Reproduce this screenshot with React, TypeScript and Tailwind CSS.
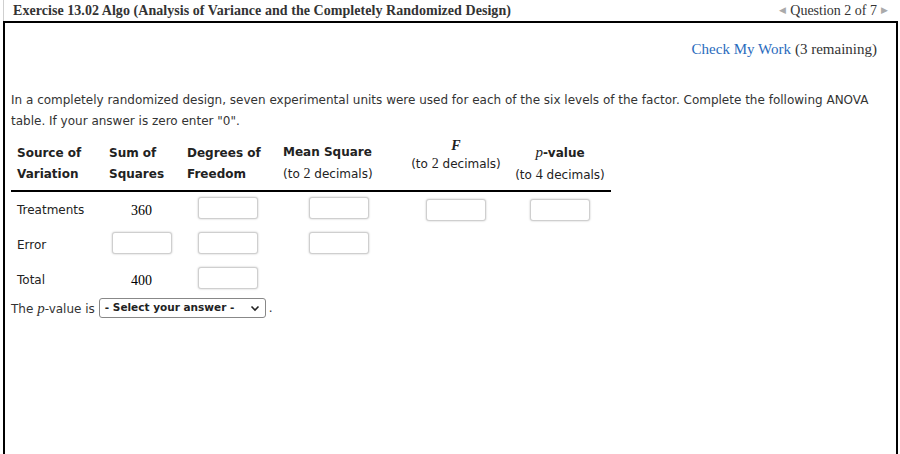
import React from "react";

const verdana = { fontFamily: '"DejaVu Sans", Verdana, sans-serif' };
const serif = { fontFamily: '"Liberation Serif", "Times New Roman", serif' };

function Box({ className = "" }: { className?: string }) {
  return (
    <span
      className={`inline-block w-[60px] h-[22px] rounded-[3px] border border-[#cfcfcf] bg-white shadow-[0_0_2px_rgba(0,0,0,0.25)] ${className}`}
    />
  );
}

function Num({ children }: { children: React.ReactNode }) {
  return (
    <span className="text-[14px] text-black" style={serif}>
      {children}
    </span>
  );
}

const cols = "grid grid-cols-[98px_78px_96px_120px_106px_102px] items-center";

export default function App() {
  return (
    <div className="w-[900px] h-[454px] bg-white overflow-hidden flex flex-col">
      {/* header strip */}
      <div className="h-[21px] flex items-center justify-between border-l border-[#cfcfcf] ml-[3px] pl-[9px] pr-[12px]">
        <span className="font-bold text-[14px] text-[#333] leading-none tracking-[0.05px]" style={serif}>
          Exercise 13.02 Algo (Analysis of Variance and the Completely Randomized Design)
        </span>
        <span className="flex items-center gap-[4px] text-[14px] text-[#333] leading-none" style={serif}>
          <span className="text-[9px] text-[#aaa]">◀</span>
          Question 2 of 7
          <span className="text-[9px] text-[#aaa]">▶</span>
        </span>
      </div>

      <div className="flex-1 ml-[3px] mr-[2px] border-2 border-black border-b-0 px-[6px]">
        <div className="flex justify-end pt-[15px] pr-[13px] text-[15px]" style={serif}>
          <span className="text-[#2a6bbd]">Check My Work</span>
          <span className="ml-[4px] text-[#333]">(3 remaining)</span>
        </div>

        <p className="mt-[29px] text-[12px] leading-[21px] text-[#333]" style={verdana}>
          In a completely randomized design, seven experimental units were used for each of the six levels of the factor. Complete the following ANOVA table. If your answer is zero enter "0".
        </p>

        <div className="mt-[10px] w-[600px] text-[12px] text-[#222]" style={verdana}>
          <div className={`${cols} pb-[4px] border-b-2 border-black leading-[21px]`}>
            <div className="pl-[6px] font-bold">Source of<br />Variation</div>
            <div className="font-bold">Sum of<br />Squares</div>
            <div className="font-bold">Degrees of<br />Freedom</div>
            <div>
              <span className="font-bold">Mean Square</span>
              <br />
              (to <span style={serif} className="text-[14px]">2</span> decimals)
            </div>
            <div className="text-center leading-[18px] self-start -mt-[5px]">
              <span style={serif} className="italic font-bold text-[14px]">F</span>
              <br />
              (to <span style={serif} className="text-[14px]">2</span> decimals)
            </div>
            <div className="text-center">
              <span style={serif} className="italic text-[15px]">p</span>
              <span className="font-bold">-value</span>
              <br />
              (to <span style={serif} className="text-[14px]">4</span> decimals)
            </div>
          </div>

          <div className={`${cols} h-[35px] mt-[1px]`}>
            <div className="pl-[6px]">Treatments</div>
            <div className="pl-[22px]"><Num>360</Num></div>
            <div className="pl-[11px]"><Box /></div>
            <div className="pl-[26px]"><Box /></div>
            <div className="flex justify-center"><Box /></div>
            <div className="flex justify-center"><Box /></div>
          </div>
          <div className={`${cols} h-[35px]`}>
            <div className="pl-[6px]">Error</div>
            <div className="pl-[3px]"><Box /></div>
            <div className="pl-[11px]"><Box /></div>
            <div className="pl-[26px]"><Box /></div>
            <div />
            <div />
          </div>
          <div className={`${cols} h-[35px]`}>
            <div className="pl-[6px]">Total</div>
            <div className="pl-[22px]"><Num>400</Num></div>
            <div className="pl-[11px]"><Box /></div>
            <div />
            <div />
            <div />
          </div>
        </div>

        <div className="flex items-center text-[12px] text-[#333] -mt-[1px]" style={verdana}>
          <span>
            The <span style={serif} className="italic text-[15px]">p</span>-value is
          </span>
          <span className="ml-[4px] w-[167px] h-[20px] flex items-center justify-between border border-[#888] rounded-[3px] pl-[5px] pr-[5px] text-[10.5px] font-bold text-[#222]">
            - Select your answer -
            <svg width="10" height="8" viewBox="0 0 10 8">
              <path d="M1.5 2.5 L5 6 L8.5 2.5" fill="none" stroke="#222" strokeWidth="1.6" />
            </svg>
          </span>
          <span className="ml-[3px]">.</span>
        </div>
      </div>
    </div>
  );
}
